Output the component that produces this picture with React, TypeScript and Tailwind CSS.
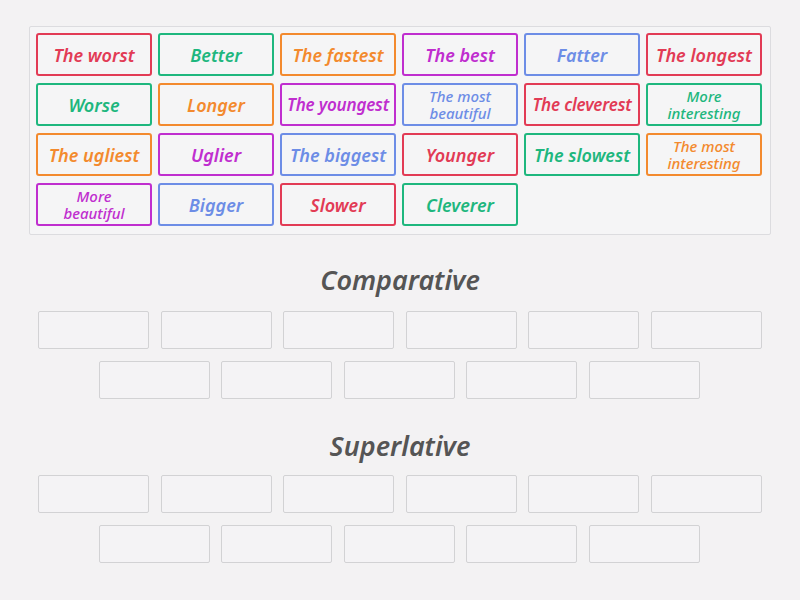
import React from "react";

type Tile = { t: string; c: string; two?: boolean; sm?: boolean };

const R = "#e23b55";
const G = "#1eb77e";
const O = "#f38a2e";
const P = "#c02ecf";
const B = "#6d8de6";

const tiles: Tile[] = [
  { t: "The worst", c: R },
  { t: "Better", c: G },
  { t: "The fastest", c: O },
  { t: "The best", c: P },
  { t: "Fatter", c: B },
  { t: "The longest", c: R },
  { t: "Worse", c: G },
  { t: "Longer", c: O },
  { t: "The youngest", c: P, sm: true },
  { t: "The most beautiful", c: B, two: true },
  { t: "The cleverest", c: R, sm: true },
  { t: "More interesting", c: G, two: true },
  { t: "The ugliest", c: O },
  { t: "Uglier", c: P },
  { t: "The biggest", c: B },
  { t: "Younger", c: R },
  { t: "The slowest", c: G },
  { t: "The most interesting", c: O, two: true },
  { t: "More beautiful", c: P, two: true },
  { t: "Bigger", c: B },
  { t: "Slower", c: R },
  { t: "Cleverer", c: G },
];

const font = { fontFamily: '"Noto Sans", "DejaVu Sans", sans-serif' };

function Slots() {
  const box = "w-[111px] h-[38px] border border-[#d2d2d4] rounded-[2px] bg-[#f4f3f5]";
  return (
    <div className="flex flex-col items-center gap-[12px]">
      <div className="flex gap-[11.5px]">
        {Array.from({ length: 6 }).map((_, i) => (
          <div key={i} className={box} />
        ))}
      </div>
      <div className="flex gap-[11.5px] -translate-x-[1px]">
        {Array.from({ length: 5 }).map((_, i) => (
          <div key={i} className={box} />
        ))}
      </div>
    </div>
  );
}

export default function App() {
  return (
    <div className="w-[800px] h-[600px] bg-[#f3f2f3] overflow-hidden" style={font}>
      <div className="pt-[26px] pl-[29px]">
        <div className="w-[742px] h-[209px] border border-[#dcdcdf] rounded-[2px] bg-[#f5f5f6] pt-[6px] pl-[6px]">
          <div className="grid grid-cols-[repeat(6,116px)] gap-x-[6px] gap-y-[7px]">
            {tiles.map((tile, i) => (
              <div
                key={i}
                className="h-[43px] border-2 rounded-[3px] flex items-center justify-center text-center italic font-semibold"
                style={{ borderColor: tile.c, color: tile.c }}
              >
                {tile.two ? (
                  <span className="text-[15px] leading-[17px] px-[14px] font-medium">{tile.t}</span>
                ) : tile.sm ? (
                  <span className="text-[17px] leading-[22px] whitespace-nowrap tracking-[-0.2px]">{tile.t}</span>
                ) : (
                  <span className="text-[18px] leading-[22px] whitespace-nowrap">{tile.t}</span>
                )}
              </div>
            ))}
          </div>
        </div>
      </div>
      <div className="mt-[30px] flex flex-col items-center">
        <div className="text-[27px] leading-[30px] italic font-semibold text-[#555555] h-[30px]">Comparative</div>
        <div className="mt-[16px]">
          <Slots />
        </div>
        <div className="mt-[32px] text-[27px] leading-[30px] italic font-semibold text-[#555555]">Superlative</div>
        <div className="mt-[14px]">
          <Slots />
        </div>
      </div>
    </div>
  );
}
